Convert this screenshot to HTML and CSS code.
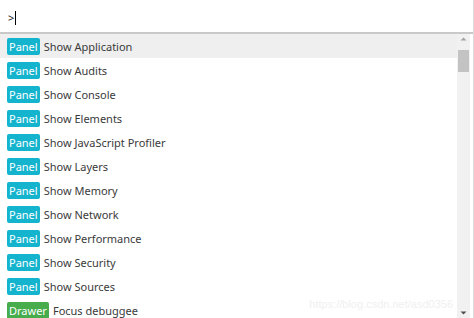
FILE: index.html
```
<!DOCTYPE html>
<html>
<head>
<meta charset="utf-8">
<link rel="stylesheet" href="styles.css">
</head>
<body>
<div class="palette">
  <div class="prompt"><span class="gt">&gt;</span><span class="caret"></span></div>
  <div class="body">
    <div class="list">
      <div class="row sel"><span class="badge panel">Panel</span><span class="label">Show Application</span></div>
      <div class="row"><span class="badge panel">Panel</span><span class="label">Show Audits</span></div>
      <div class="row"><span class="badge panel">Panel</span><span class="label">Show Console</span></div>
      <div class="row"><span class="badge panel">Panel</span><span class="label">Show Elements</span></div>
      <div class="row"><span class="badge panel">Panel</span><span class="label">Show JavaScript Profiler</span></div>
      <div class="row"><span class="badge panel">Panel</span><span class="label">Show Layers</span></div>
      <div class="row"><span class="badge panel">Panel</span><span class="label">Show Memory</span></div>
      <div class="row"><span class="badge panel">Panel</span><span class="label">Show Network</span></div>
      <div class="row"><span class="badge panel">Panel</span><span class="label">Show Performance</span></div>
      <div class="row"><span class="badge panel">Panel</span><span class="label">Show Security</span></div>
      <div class="row"><span class="badge panel">Panel</span><span class="label">Show Sources</span></div>
      <div class="row"><span class="badge drawer">Drawer</span><span class="label">Focus debuggee</span></div>
    </div>
    <div class="scrollbar">
      <svg class="arrow" width="13" height="10" viewBox="0 0 13 10"><path d="M3.5 6.5 L6.5 3.5 L9.5 6.5 Z" fill="#a3a3a3"/></svg>
      <div class="thumb"></div>
      <div class="track"></div>
      <svg class="arrow" width="13" height="10" viewBox="0 0 13 10"><path d="M3.5 3.5 L9.5 3.5 L6.5 6.5 Z" fill="#505050"/></svg>
    </div>
    <div class="watermark">https://blog.csdn.net/asd0356</div>
  </div>
</div>
</body>
</html>
```
FILE: styles.css
```
html, body {
  margin: 0;
  padding: 0;
  background: #ffffff;
  overflow: hidden;
}
.palette {
  width: 474px;
  height: 318px;
  display: flex;
  flex-direction: column;
  font-family: "Noto Sans", "Open Sans", sans-serif;
  border-right: 1px solid #dcdcdc;
  box-sizing: border-box;
}
.prompt {
  height: 34px;
  flex: none;
  display: flex;
  align-items: center;
  padding-left: 8px;
  padding-top: 3px;
  box-sizing: border-box;
  border-bottom: 2px solid #c9c9c9;
  font-size: 11px;
  color: #222;
}
.gt { line-height: 12px; }
.caret {
  width: 1px;
  height: 14px;
  background: #000;
  margin-left: 1px;
}
.body {
  flex: 1;
  display: flex;
  position: relative;
  overflow: hidden;
}
.list {
  flex: 1;
  display: flex;
  flex-direction: column;
}
.row {
  height: 24px;
  flex: none;
  display: flex;
  align-items: center;
  padding-left: 7px;
}
.row.sel { background: #efefef; }
.badge {
  height: 17px;
  line-height: 17px;
  padding: 0 2px;
  border-radius: 2px;
  color: #fff;
  font-size: 11px;
  margin-right: 4px;
}
.panel { background: #14b4cf; }
.drawer { background: #46ac4c; }
.label {
  font-size: 11px;
  color: #3a3a3a;
}
.scrollbar {
  width: 13px;
  margin-right: 3px;
  display: flex;
  flex-direction: column;
  background: #f1f1f1;
}
.arrow { display: block; flex: none; }
.thumb {
  height: 22px;
  margin: 6px 1px 0 1px;
  background: #c3c3c3;
  flex: none;
}
.track { flex: 1; }
.watermark {
  position: absolute;
  right: 20px;
  bottom: 8px;
  font-family: "Liberation Sans", sans-serif;
  font-size: 11px;
  color: #f0f0f0;
}
```
